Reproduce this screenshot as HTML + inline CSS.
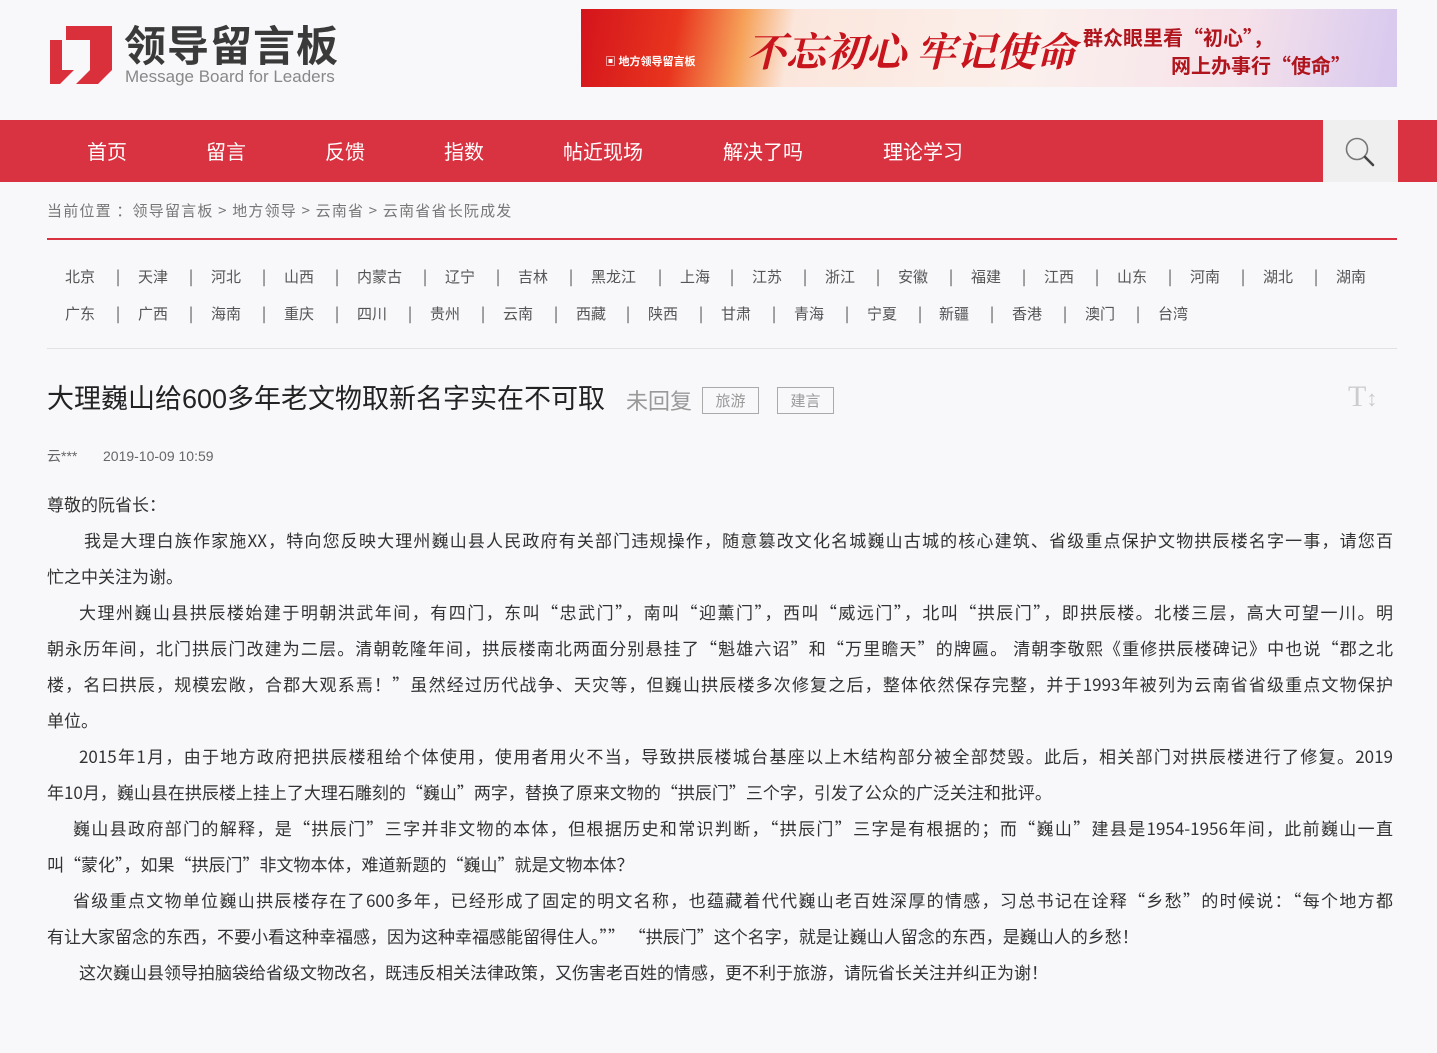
<!DOCTYPE html>
<html><head><meta charset="utf-8"><style>
*{margin:0;padding:0;box-sizing:border-box}
body{width:1437px;height:1053px;background:#f8f7fa;font-family:"Liberation Sans","Noto Sans CJK SC",sans-serif;position:relative;overflow:hidden;color:#333}
.abs{position:absolute}
.cjk{font-family:"Noto Sans CJK SC","Liberation Sans",sans-serif}
.nav{top:120px;left:0;width:1437px;height:62px;background:#d93241}
.nav span{position:absolute;top:19px;color:#fff;font-size:20px;line-height:24px}
.prov{font-size:15px;color:#555;white-space:nowrap;line-height:20px}
.prov span{position:absolute}
.prov i{position:absolute;font-style:normal;color:#444}
.l{position:absolute;left:47px;width:1346px;font-size:17px;line-height:20px;white-space:nowrap;color:#333;font-family:"Noto Sans CJK SC","Liberation Sans",sans-serif}
.j{text-align:justify;text-align-last:justify}
</style></head><body>
<svg class="abs" style="left:50px;top:24px" width="62" height="60" viewBox="0 0 62 60">
<path d="M14 2H62V46L48 60H26L40 46V16H16L16 2Z" fill="#d9303c"/>
<path d="M0 16H12V46H24L10 60H0Z" fill="#d9303c"/>
</svg>
<div class="abs cjk" style="left:124px;top:16px;font-size:42px;line-height:56px;font-weight:bold;color:#3a3a3a;letter-spacing:1px">领导留言板</div>
<div class="abs" style="left:125px;top:67px;font-size:17px;line-height:20px;color:#888">Message Board for Leaders</div>
<div class="abs" style="left:581px;top:9px;width:816px;height:78px;background:linear-gradient(100deg,#d4141c 0%,#e8351e 12%,#f6a25a 20%,#fbe6dc 26%,#fbf0ec 55%,#f6e2ea 80%,#d7c8ef 100%);overflow:hidden">
<div class="abs cjk" style="left:24px;top:44px;color:#fff;font-size:11px;font-weight:bold">▣ 地方领导留言板</div>
<div class="abs" style="left:165px;top:14px;color:#c8141c;font-size:40px;font-style:italic;font-weight:bold;font-family:'Noto Serif CJK SC',serif;line-height:54px">不忘初心 牢记使命</div>
<div class="abs cjk" style="left:502px;top:14px;color:#b0141c;font-size:20px;font-weight:bold;line-height:28px">群众眼里看“初心”，</div>
<div class="abs cjk" style="left:590px;top:42px;color:#b0141c;font-size:20px;font-weight:bold;line-height:28px">网上办事行“使命”</div>
</div>
<div class="abs nav cjk">
<span style="left:87px">首页</span><span style="left:206px">留言</span><span style="left:325px">反馈</span><span style="left:444px">指数</span><span style="left:563px">帖近现场</span><span style="left:723px">解决了吗</span><span style="left:883px">理论学习</span>
<div class="abs" style="left:1323px;top:0;width:75px;height:62px;background:#efeff0">
<svg class="abs" style="left:20px;top:16px" width="36" height="32" viewBox="0 0 36 32"><circle cx="14" cy="13" r="10.5" fill="none" stroke="#777" stroke-width="1.6"/><path d="M22 21L30 29" stroke="#444" stroke-width="2.6" stroke-linecap="round"/></svg>
</div>
</div>
<div class="abs cjk" style="left:47px;top:200px;font-size:15px;line-height:22px;color:#777;white-space:nowrap;letter-spacing:1.2px">当前位置 ：领导留言板 &gt; 地方领导 &gt; 云南省 &gt; 云南省省长阮成发</div>
<div class="abs" style="left:47px;top:238px;width:1350px;height:2px;background:#d93241"></div>
<div class="prov cjk">
<span style="left:65px;top:267px">北京</span><span style="left:138px;top:267px">天津</span><span style="left:211px;top:267px">河北</span><span style="left:284px;top:267px">山西</span><span style="left:357px;top:267px">内蒙古</span><span style="left:445px;top:267px">辽宁</span><span style="left:518px;top:267px">吉林</span><span style="left:591px;top:267px">黑龙江</span><span style="left:680px;top:267px">上海</span><span style="left:752px;top:267px">江苏</span><span style="left:825px;top:267px">浙江</span><span style="left:898px;top:267px">安徽</span><span style="left:971px;top:267px">福建</span><span style="left:1044px;top:267px">江西</span><span style="left:1117px;top:267px">山东</span><span style="left:1190px;top:267px">河南</span><span style="left:1263px;top:267px">湖北</span><span style="left:1336px;top:267px">湖南</span>
<i style="left:116px;top:267px">|</i><i style="left:189px;top:267px">|</i><i style="left:262px;top:267px">|</i><i style="left:335px;top:267px">|</i><i style="left:423px;top:267px">|</i><i style="left:496px;top:267px">|</i><i style="left:569px;top:267px">|</i><i style="left:658px;top:267px">|</i><i style="left:730px;top:267px">|</i><i style="left:803px;top:267px">|</i><i style="left:876px;top:267px">|</i><i style="left:949px;top:267px">|</i><i style="left:1022px;top:267px">|</i><i style="left:1095px;top:267px">|</i><i style="left:1168px;top:267px">|</i><i style="left:1241px;top:267px">|</i><i style="left:1314px;top:267px">|</i>
<span style="left:65px;top:304px">广东</span><span style="left:138px;top:304px">广西</span><span style="left:211px;top:304px">海南</span><span style="left:284px;top:304px">重庆</span><span style="left:357px;top:304px">四川</span><span style="left:430px;top:304px">贵州</span><span style="left:503px;top:304px">云南</span><span style="left:576px;top:304px">西藏</span><span style="left:648px;top:304px">陕西</span><span style="left:721px;top:304px">甘肃</span><span style="left:794px;top:304px">青海</span><span style="left:867px;top:304px">宁夏</span><span style="left:939px;top:304px">新疆</span><span style="left:1012px;top:304px">香港</span><span style="left:1085px;top:304px">澳门</span><span style="left:1158px;top:304px">台湾</span>
<i style="left:116px;top:304px">|</i><i style="left:189px;top:304px">|</i><i style="left:262px;top:304px">|</i><i style="left:335px;top:304px">|</i><i style="left:408px;top:304px">|</i><i style="left:481px;top:304px">|</i><i style="left:554px;top:304px">|</i><i style="left:626px;top:304px">|</i><i style="left:699px;top:304px">|</i><i style="left:772px;top:304px">|</i><i style="left:845px;top:304px">|</i><i style="left:918px;top:304px">|</i><i style="left:990px;top:304px">|</i><i style="left:1063px;top:304px">|</i><i style="left:1136px;top:304px">|</i>
</div>
<div class="abs" style="left:47px;top:348px;width:1350px;height:1px;background:#e2e2e4"></div>
<div class="abs" style="left:47px;top:381px;font-size:27px;line-height:36px;color:#222;white-space:nowrap">大理巍山给600多年老文物取新名字实在不可取</div>
<div class="abs cjk" style="left:626px;top:385px;font-size:22px;line-height:30px;color:#999">未回复</div>
<div class="abs cjk" style="left:702px;top:387px;width:57px;height:27px;border:1px solid #aaa;font-size:15px;line-height:25px;color:#999;text-align:center">旅游</div>
<div class="abs cjk" style="left:777px;top:387px;width:57px;height:27px;border:1px solid #aaa;font-size:15px;line-height:25px;color:#999;text-align:center">建言</div>
<div class="abs" style="left:1348px;top:380px;font-size:30px;line-height:34px;color:#ccc;font-family:'Liberation Serif',serif">T<span style="font-size:22px">↕</span></div>
<div class="abs" style="left:47px;top:447px;font-size:14px;line-height:18px;color:#666">云***</div>
<div class="abs" style="left:103px;top:447px;font-size:14px;line-height:18px;color:#666">2019-10-09 10:59</div>
<div class="l" style="top:494px">尊敬的阮省长：</div>
<div class="l j" style="top:530px;padding-left:37px">我是大理白族作家施XX，特向您反映大理州巍山县人民政府有关部门违规操作，随意篡改文化名城巍山古城的核心建筑、省级重点保护文物拱辰楼名字一事，请您百</div>
<div class="l" style="top:566px">忙之中关注为谢。</div>
<div class="l j" style="top:602px;padding-left:32px">大理州巍山县拱辰楼始建于明朝洪武年间，有四门，东叫“忠武门”，南叫“迎薰门”，西叫“威远门”，北叫“拱辰门”，即拱辰楼。北楼三层，高大可望一川。明</div>
<div class="l j" style="top:638px">朝永历年间，北门拱辰门改建为二层。清朝乾隆年间，拱辰楼南北两面分别悬挂了“魁雄六诏”和“万里瞻天”的牌匾。 清朝李敬熙《重修拱辰楼碑记》中也说“郡之北</div>
<div class="l j" style="top:674px">楼，名曰拱辰，规模宏敞，合郡大观系焉！”虽然经过历代战争、天灾等，但巍山拱辰楼多次修复之后，整体依然保存完整，并于1993年被列为云南省省级重点文物保护</div>
<div class="l" style="top:710px">单位。</div>
<div class="l j" style="top:746px;padding-left:32px">2015年1月，由于地方政府把拱辰楼租给个体使用，使用者用火不当，导致拱辰楼城台基座以上木结构部分被全部焚毁。此后，相关部门对拱辰楼进行了修复。2019</div>
<div class="l" style="top:782px">年10月，巍山县在拱辰楼上挂上了大理石雕刻的“巍山”两字，替换了原来文物的“拱辰门”三个字，引发了公众的广泛关注和批评。</div>
<div class="l j" style="top:818px;padding-left:26px">巍山县政府部门的解释，是“拱辰门”三字并非文物的本体，但根据历史和常识判断，“拱辰门”三字是有根据的；而“巍山”建县是1954-1956年间，此前巍山一直</div>
<div class="l" style="top:854px">叫“蒙化”，如果“拱辰门”非文物本体，难道新题的“巍山”就是文物本体？</div>
<div class="l j" style="top:890px;padding-left:26px">省级重点文物单位巍山拱辰楼存在了600多年，已经形成了固定的明文名称，也蕴藏着代代巍山老百姓深厚的情感，习总书记在诠释“乡愁”的时候说：“每个地方都</div>
<div class="l" style="top:926px">有让大家留念的东西，不要小看这种幸福感，因为这种幸福感能留得住人。”” “拱辰门”这个名字，就是让巍山人留念的东西，是巍山人的乡愁！</div>
<div class="l" style="top:962px;padding-left:32px">这次巍山县领导拍脑袋给省级文物改名，既违反相关法律政策，又伤害老百姓的情感，更不利于旅游，请阮省长关注并纠正为谢！</div>
</body></html>
